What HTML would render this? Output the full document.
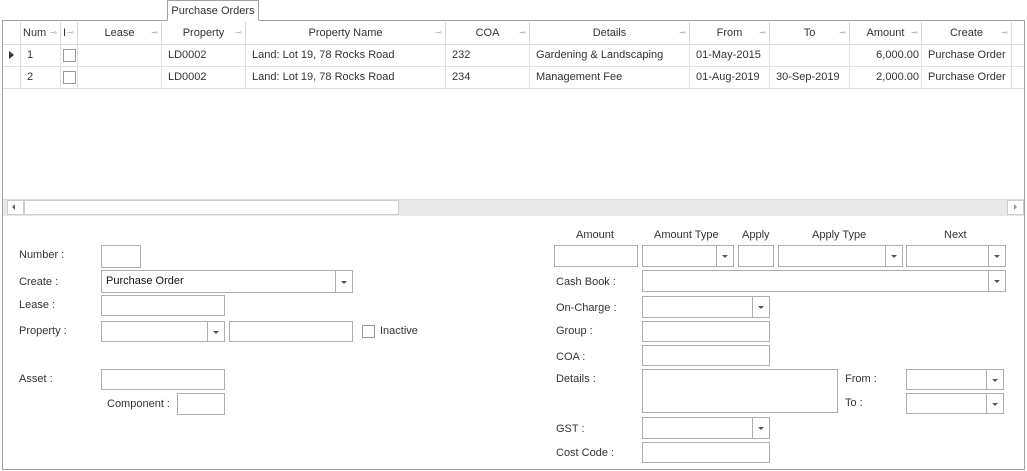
<!DOCTYPE html><html><head><style>
body{margin:0;width:1027px;height:471px;background:#fff;font-family:"Liberation Sans",sans-serif;font-size:11px;color:#333;position:relative;overflow:hidden}
.a{position:absolute}
.b{position:absolute;border:1px solid #abadb3;background:#fff;box-sizing:border-box}
.dd::after{content:"";position:absolute;right:0;top:0;bottom:0;width:16px;border-left:1px solid #abadb3;background:linear-gradient(#fff,#fff)}
.dd::before{content:"";position:absolute;right:5px;top:50%;margin-top:-1px;border:3px solid transparent;border-top:3px solid #555;z-index:2}
.h{position:absolute;top:22px;height:22px;line-height:22px;text-align:center;border-right:1px solid #d8d8d8;box-sizing:border-box;color:#333}
.pin{position:absolute;right:3px;top:0;color:#aaa;font-size:8px}
.c{position:absolute;height:22px;line-height:22px;border-right:1px solid #e0e0e0;box-sizing:border-box;padding-left:6px;white-space:nowrap}
.l{position:absolute;color:#333}
</style></head><body>
<div class="a" style="left:2px;top:20px;width:1023px;height:450px;border:1px solid #a0a0a0;border-top:1px solid #a0a0a0;box-sizing:border-box"></div>
<div class="a" style="left:167px;top:0;width:92px;height:21px;border:1px solid #a0a0a0;border-bottom:1px solid #fff;background:#fff;line-height:20px;text-align:center;box-sizing:border-box">Purchase Orders</div>
<!-- header -->
<div class="a" style="left:3px;top:44px;width:1021px;height:1px;background:#d8d8d8"></div>
<div class="h" style="left:3px;width:18px"></div>
<div class="h" style="left:21px;width:40px;text-align:left;padding-left:2px">Num<span class="pin">⊸</span></div>
<div class="h" style="left:61px;width:17px;text-align:left;padding-left:2px">I<span class="pin">⊸</span></div>
<div class="h" style="left:78px;width:84px">Lease<span class="pin">⊸</span></div>
<div class="h" style="left:162px;width:84px">Property<span class="pin">⊸</span></div>
<div class="h" style="left:246px;width:200px">Property Name<span class="pin">⊸</span></div>
<div class="h" style="left:446px;width:84px">COA<span class="pin">⊸</span></div>
<div class="h" style="left:530px;width:160px">Details<span class="pin">⊸</span></div>
<div class="h" style="left:690px;width:80px">From<span class="pin">⊸</span></div>
<div class="h" style="left:770px;width:80px">To<span class="pin">⊸</span></div>
<div class="h" style="left:850px;width:72px">Amount<span class="pin">⊸</span></div>
<div class="h" style="left:922px;width:90px">Create<span class="pin">⊸</span></div>
<!-- rows -->
<div class="a" style="left:3px;top:66px;width:1021px;height:1px;background:#e0e0e0"></div>
<div class="a" style="left:3px;top:88px;width:1021px;height:1px;background:#e0e0e0"></div>
<div class="a" style="left:9px;top:51px;border:4px solid transparent;border-left:5px solid #333"></div>
<div class="a" style="left:20px;top:44px;width:1px;height:44px;background:#e0e0e0"></div>
<div class="c" style="left:21px;top:44px;width:40px">1</div>
<div class="c" style="left:21px;top:66px;width:40px">2</div>
<div class="b" style="left:63px;top:49px;width:13px;height:13px;border-color:#999"></div>
<div class="b" style="left:63px;top:71px;width:13px;height:13px;border-color:#999"></div>
<div class="c" style="left:61px;top:44px;width:17px;padding:0;height:44px"></div>
<div class="c" style="left:78px;top:44px;width:84px;height:44px"></div>
<div class="c" style="left:162px;top:44px;width:84px">LD0002</div>
<div class="c" style="left:162px;top:66px;width:84px">LD0002</div>
<div class="c" style="left:246px;top:44px;width:200px">Land: Lot 19, 78 Rocks Road</div>
<div class="c" style="left:246px;top:66px;width:200px">Land: Lot 19, 78 Rocks Road</div>
<div class="c" style="left:446px;top:44px;width:84px">232</div>
<div class="c" style="left:446px;top:66px;width:84px">234</div>
<div class="c" style="left:530px;top:44px;width:160px">Gardening &amp; Landscaping</div>
<div class="c" style="left:530px;top:66px;width:160px">Management Fee</div>
<div class="c" style="left:690px;top:44px;width:80px">01-May-2015</div>
<div class="c" style="left:690px;top:66px;width:80px">01-Aug-2019</div>
<div class="c" style="left:770px;top:44px;width:80px;height:44px"></div>
<div class="c" style="left:770px;top:66px;width:80px">30-Sep-2019</div>
<div class="c" style="left:850px;top:44px;width:72px;text-align:right;padding:0 2px 0 0">6,000.00</div>
<div class="c" style="left:850px;top:66px;width:72px;text-align:right;padding:0 2px 0 0">2,000.00</div>
<div class="c" style="left:922px;top:44px;width:90px">Purchase Order</div>
<div class="c" style="left:922px;top:66px;width:90px">Purchase Order</div>
<!-- hscroll -->
<div class="a" style="left:3px;top:199px;width:1021px;height:17px;background:#e8e8e8;border-top:1px solid #ddd;box-sizing:border-box"></div>
<div class="b" style="left:7px;top:200px;width:17px;height:15px;border-color:#ccc"></div>
<div class="a" style="left:12px;top:204px;border:3px solid transparent;border-right:3px solid #666;border-left:0"></div>
<div class="b" style="left:24px;top:200px;width:375px;height:15px;border-color:#ccc"></div>
<div class="b" style="left:1007px;top:200px;width:17px;height:15px;border-color:#ccc"></div>
<div class="a" style="left:1014px;top:204px;border:3px solid transparent;border-left:3px solid #999;border-right:0"></div>
<!-- left form -->
<div class="l" style="left:19px;top:249px">Number :</div>
<div class="b" style="left:101px;top:245px;width:40px;height:23px"></div>
<div class="l" style="left:19px;top:276px">Create :</div>
<div class="b dd" style="left:101px;top:270px;width:252px;height:23px;padding:4px 4px;color:#111">Purchase Order</div>
<div class="l" style="left:19px;top:299px">Lease :</div>
<div class="b" style="left:101px;top:295px;width:124px;height:21px"></div>
<div class="l" style="left:19px;top:325px">Property :</div>
<div class="b dd" style="left:101px;top:321px;width:124px;height:21px"></div>
<div class="b" style="left:229px;top:321px;width:124px;height:21px"></div>
<div class="b" style="left:362px;top:325px;width:13px;height:13px;border-color:#999"></div>
<div class="l" style="left:380px;top:325px">Inactive</div>
<div class="l" style="left:19px;top:373px">Asset :</div>
<div class="b" style="left:101px;top:369px;width:124px;height:21px"></div>
<div class="l" style="left:107px;top:398px">Component :</div>
<div class="b" style="left:177px;top:393px;width:48px;height:22px"></div>
<!-- right form -->
<div class="l" style="left:576px;top:229px">Amount</div>
<div class="l" style="left:654px;top:229px">Amount Type</div>
<div class="l" style="left:742px;top:229px">Apply</div>
<div class="l" style="left:812px;top:229px">Apply Type</div>
<div class="l" style="left:944px;top:229px">Next</div>
<div class="b" style="left:554px;top:245px;width:84px;height:22px"></div>
<div class="b dd" style="left:642px;top:245px;width:92px;height:22px"></div>
<div class="b" style="left:738px;top:245px;width:36px;height:22px"></div>
<div class="b dd" style="left:778px;top:245px;width:125px;height:22px"></div>
<div class="b dd" style="left:906px;top:245px;width:100px;height:22px"></div>
<div class="l" style="left:556px;top:276px">Cash Book :</div>
<div class="b dd" style="left:642px;top:270px;width:364px;height:22px"></div>
<div class="l" style="left:556px;top:302px">On-Charge :</div>
<div class="b dd" style="left:642px;top:296px;width:128px;height:22px"></div>
<div class="l" style="left:556px;top:325px">Group :</div>
<div class="b" style="left:642px;top:321px;width:128px;height:21px"></div>
<div class="l" style="left:556px;top:351px">COA :</div>
<div class="b" style="left:642px;top:345px;width:128px;height:21px"></div>
<div class="l" style="left:556px;top:373px">Details :</div>
<div class="b" style="left:642px;top:369px;width:196px;height:44px"></div>
<div class="l" style="left:845px;top:373px">From :</div>
<div class="b dd" style="left:906px;top:369px;width:98px;height:21px"></div>
<div class="l" style="left:845px;top:397px">To :</div>
<div class="b dd" style="left:906px;top:393px;width:98px;height:21px"></div>
<div class="l" style="left:556px;top:423px">GST :</div>
<div class="b dd" style="left:642px;top:417px;width:128px;height:22px"></div>
<div class="l" style="left:556px;top:447px">Cost Code :</div>
<div class="b" style="left:642px;top:442px;width:128px;height:21px"></div>
</body></html>
